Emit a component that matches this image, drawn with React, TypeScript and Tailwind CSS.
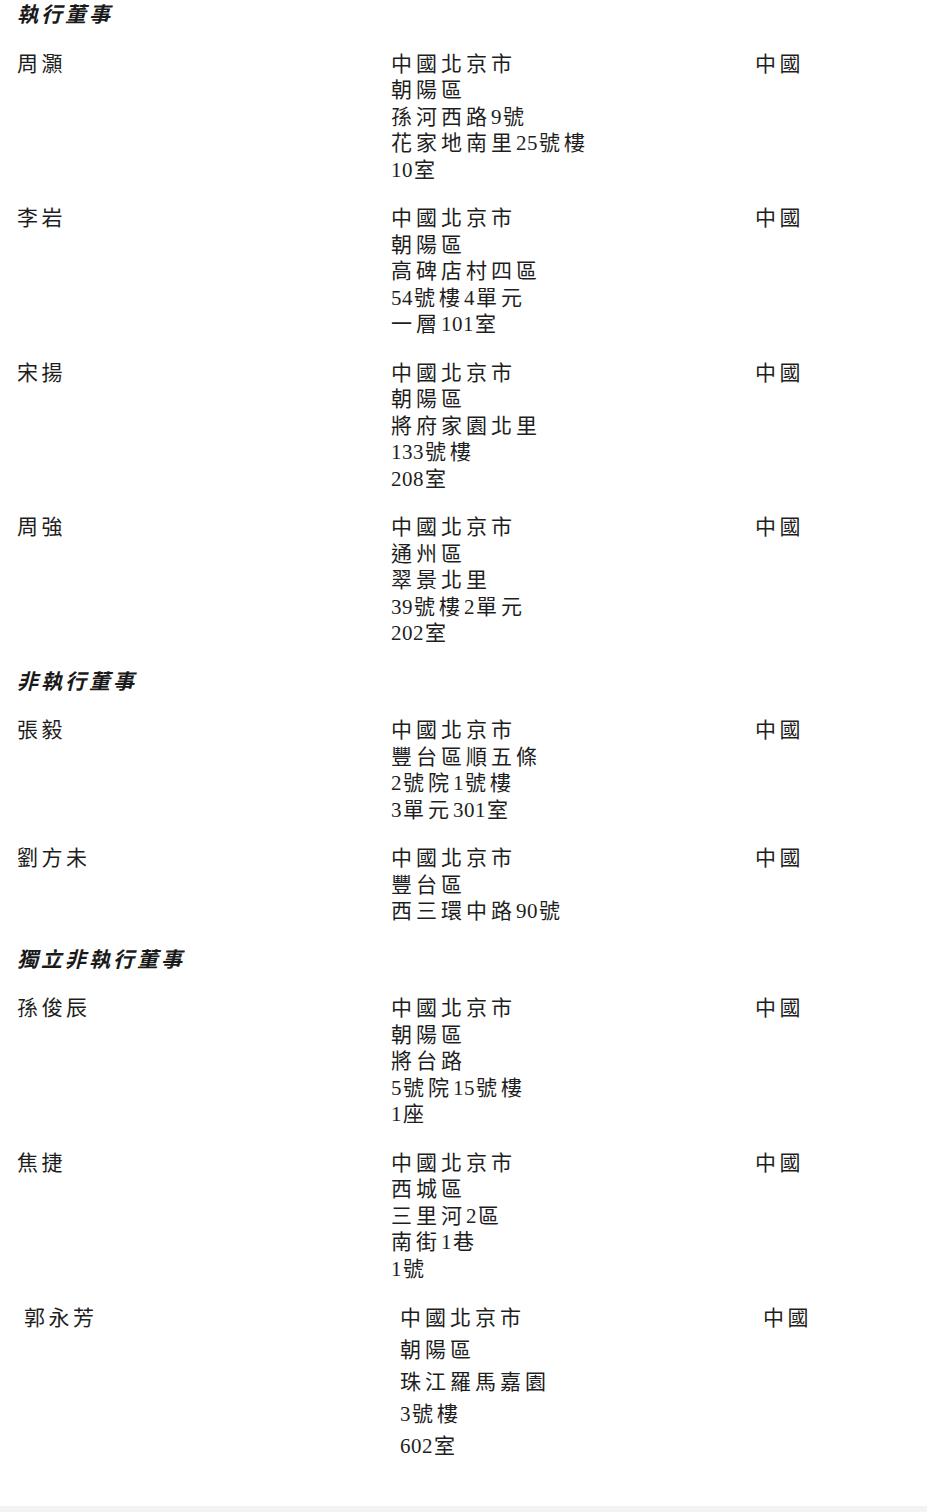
import React from "react";

type Entry = { name: string; addr: string[] };
type Section = { title: string; entries: Entry[] };

const sections: Section[] = [
  {
    title: "執行董事",
    entries: [
      { name: "周灝", addr: ["中國北京市", "朝陽區", "孫河西路9號", "花家地南里25號樓", "10室"] },
      { name: "李岩", addr: ["中國北京市", "朝陽區", "高碑店村四區", "54號樓4單元", "一層101室"] },
      { name: "宋揚", addr: ["中國北京市", "朝陽區", "將府家園北里", "133號樓", "208室"] },
      { name: "周強", addr: ["中國北京市", "通州區", "翠景北里", "39號樓2單元", "202室"] },
    ],
  },
  {
    title: "非執行董事",
    entries: [
      { name: "張毅", addr: ["中國北京市", "豐台區順五條", "2號院1號樓", "3單元301室"] },
      { name: "劉方未", addr: ["中國北京市", "豐台區", "西三環中路90號"] },
    ],
  },
  {
    title: "獨立非執行董事",
    entries: [
      { name: "孫俊辰", addr: ["中國北京市", "朝陽區", "將台路", "5號院15號樓", "1座"] },
      { name: "焦捷", addr: ["中國北京市", "西城區", "三里河2區", "南街1巷", "1號"] },
    ],
  },
];

const font = { fontFamily: '"Liberation Serif", "Noto Sans CJK TC", serif' };

function Line({ text }: { text: string }) {
  const parts = text.split(/(\d+)/).filter((p) => p.length > 0);
  return (
    <div className="whitespace-nowrap tracking-[4px]">
      {parts.map((p, i) =>
        /^\d+$/.test(p) ? (
          <span key={i} className="tracking-[0.5px] mr-[1px]">
            {p}
          </span>
        ) : (
          <span key={i}>{p}</span>
        )
      )}
    </div>
  );
}

function Row({ e }: { e: Entry }) {
  return (
    <div className="grid grid-cols-[374px_364px_1fr] text-[21px] leading-[26.5px] tracking-[3.5px] text-[#1e1e1e]">
      <div>{e.name}</div>
      <div className="flex flex-col">
        {e.addr.map((a, i) => (
          <Line key={i} text={a} />
        ))}
      </div>
      <div>中國</div>
    </div>
  );
}

export default function App() {
  return (
    <div className="w-[927px] min-h-[1512px] bg-[#f3f3f3]" style={font}>
      <div className="h-[1506px] bg-white pl-[17px] pt-[2px] flex flex-col gap-[22px]">
        {sections.map((s, si) => (
          <React.Fragment key={si}>
            <div className="text-[21px] leading-[26.5px] tracking-[3px] font-bold italic text-[#1a1a1a]">
              {s.title}
            </div>
            {s.entries.map((e, ei) => (
              <Row key={ei} e={e} />
            ))}
          </React.Fragment>
        ))}
        <div className="pl-[7px] grid grid-cols-[376px_363px_1fr] text-[21px] leading-[32px] tracking-[3.5px] text-[#1e1e1e] -mt-[2px]">
          <div>郭永芳</div>
          <div className="flex flex-col">
            {["中國北京市", "朝陽區", "珠江羅馬嘉園", "3號樓", "602室"].map((a, i) => (
              <Line key={i} text={a} />
            ))}
          </div>
          <div>中國</div>
        </div>
      </div>
    </div>
  );
}
